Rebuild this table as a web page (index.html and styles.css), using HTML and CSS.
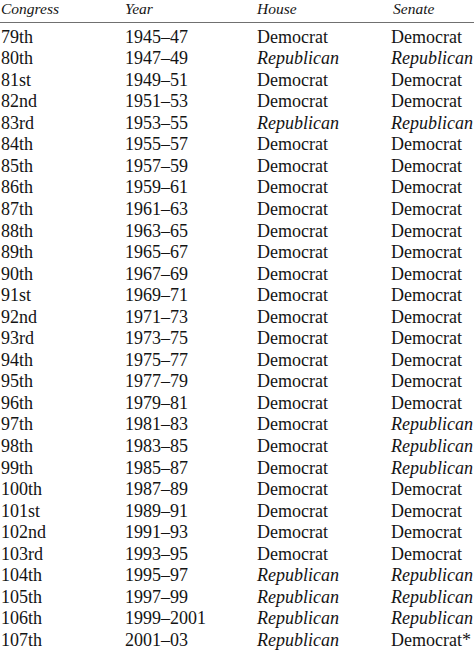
FILE: index.html
```html
<!DOCTYPE html>
<html lang="en">
<head>
<meta charset="utf-8">
<title>Party control of Congress</title>
<link rel="stylesheet" href="styles.css">
</head>
<body>
<div class="table">
  <div class="row head"><span>Congress</span><span>Year</span><span>House</span><span>Senate</span></div>
  <div class="body">
    <div class="row"><span>79th</span><span>1945–47</span><span>Democrat</span><span>Democrat</span></div>
    <div class="row"><span>80th</span><span>1947–49</span><span class="rep">Republican</span><span class="rep">Republican</span></div>
    <div class="row"><span>81st</span><span>1949–51</span><span>Democrat</span><span>Democrat</span></div>
    <div class="row"><span>82nd</span><span>1951–53</span><span>Democrat</span><span>Democrat</span></div>
    <div class="row"><span>83rd</span><span>1953–55</span><span class="rep">Republican</span><span class="rep">Republican</span></div>
    <div class="row"><span>84th</span><span>1955–57</span><span>Democrat</span><span>Democrat</span></div>
    <div class="row"><span>85th</span><span>1957–59</span><span>Democrat</span><span>Democrat</span></div>
    <div class="row"><span>86th</span><span>1959–61</span><span>Democrat</span><span>Democrat</span></div>
    <div class="row"><span>87th</span><span>1961–63</span><span>Democrat</span><span>Democrat</span></div>
    <div class="row"><span>88th</span><span>1963–65</span><span>Democrat</span><span>Democrat</span></div>
    <div class="row"><span>89th</span><span>1965–67</span><span>Democrat</span><span>Democrat</span></div>
    <div class="row"><span>90th</span><span>1967–69</span><span>Democrat</span><span>Democrat</span></div>
    <div class="row"><span>91st</span><span>1969–71</span><span>Democrat</span><span>Democrat</span></div>
    <div class="row"><span>92nd</span><span>1971–73</span><span>Democrat</span><span>Democrat</span></div>
    <div class="row"><span>93rd</span><span>1973–75</span><span>Democrat</span><span>Democrat</span></div>
    <div class="row"><span>94th</span><span>1975–77</span><span>Democrat</span><span>Democrat</span></div>
    <div class="row"><span>95th</span><span>1977–79</span><span>Democrat</span><span>Democrat</span></div>
    <div class="row"><span>96th</span><span>1979–81</span><span>Democrat</span><span>Democrat</span></div>
    <div class="row"><span>97th</span><span>1981–83</span><span>Democrat</span><span class="rep">Republican</span></div>
    <div class="row"><span>98th</span><span>1983–85</span><span>Democrat</span><span class="rep">Republican</span></div>
    <div class="row"><span>99th</span><span>1985–87</span><span>Democrat</span><span class="rep">Republican</span></div>
    <div class="row"><span>100th</span><span>1987–89</span><span>Democrat</span><span>Democrat</span></div>
    <div class="row"><span>101st</span><span>1989–91</span><span>Democrat</span><span>Democrat</span></div>
    <div class="row"><span>102nd</span><span>1991–93</span><span>Democrat</span><span>Democrat</span></div>
    <div class="row"><span>103rd</span><span>1993–95</span><span>Democrat</span><span>Democrat</span></div>
    <div class="row"><span>104th</span><span>1995–97</span><span class="rep">Republican</span><span class="rep">Republican</span></div>
    <div class="row"><span>105th</span><span>1997–99</span><span class="rep">Republican</span><span class="rep">Republican</span></div>
    <div class="row"><span>106th</span><span>1999–2001</span><span class="rep">Republican</span><span class="rep">Republican</span></div>
    <div class="row"><span>107th</span><span>2001–03</span><span class="rep">Republican</span><span>Democrat*</span></div>
  </div>
</div>
</body>
</html>
```
FILE: styles.css
```css
html, body {
  margin: 0;
  padding: 0;
  background: #ffffff;
  overflow: hidden;
}
body {
  width: 474px;
  height: 651px;
  font-family: "Liberation Serif", "Times New Roman", serif;
  font-size: 18px;
  color: #141414;
}
.table {
  width: 474px;
}
.row {
  display: grid;
  grid-template-columns: 124px 132px 134px 1fr;
  padding-left: 1px;
  height: 21.55px;
  line-height: 21.55px;
  white-space: nowrap;
}
.head {
  font-style: italic;
  font-size: 15.5px;
  height: 18px;
  line-height: normal;
  padding-bottom: 4px;
  border-bottom: 1px solid #707070;
}
.head span:nth-child(4) {
  padding-left: 2px;
}
.body {
  padding-top: 3.6px;
}
.rep {
  font-style: italic;
}
```
